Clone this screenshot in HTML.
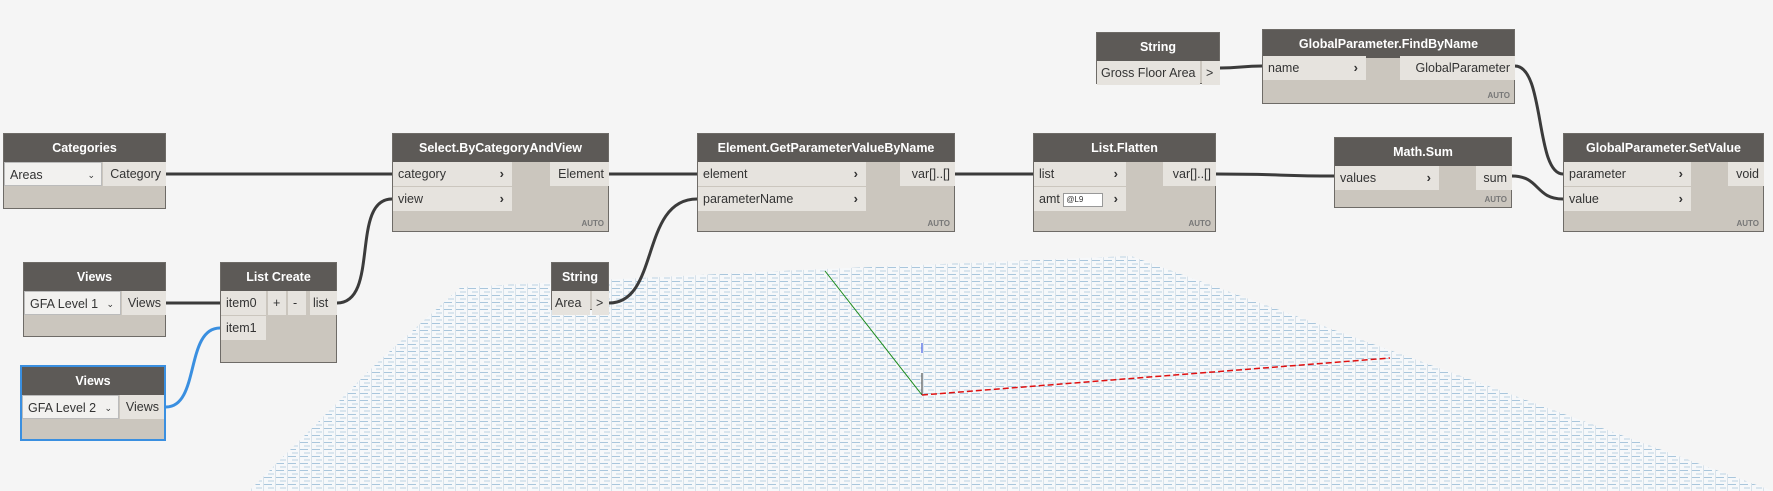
<!DOCTYPE html>
<html><head><meta charset="utf-8"><style>
*{margin:0;padding:0;box-sizing:border-box}
body{width:1773px;height:491px;background:#f5f5f5;position:relative;overflow:hidden;font-family:"Liberation Sans",sans-serif;font-size:12.5px;color:#333}
.n{position:absolute;background:#cbc6be;border:1px solid #6e6b67}
.h{position:absolute;left:0;right:0;top:0;height:28px;background:#5d5a57;color:#fff;font-weight:bold;font-size:12.5px;text-align:center;line-height:28px}
.p{position:absolute;background:#e6e3de;height:24px;line-height:24px;padding-left:5px;white-space:nowrap}
.a{position:absolute;right:4px;font-weight:bold;font-size:8px;color:#777}
.c{position:absolute;right:8px;font-weight:bold;font-size:13px}
.o{text-align:right;padding-right:5px}
svg{position:absolute;left:0;top:0}
</style></head><body>
<svg width="1773" height="491">
<defs>
<pattern id="g" width="12" height="7" patternUnits="userSpaceOnUse">
<rect width="12" height="7" fill="#f6f8fa"/>
<rect x="0" y="1" width="8" height="1" fill="#a9c6dc"/>
<rect x="4" y="4.5" width="6" height="1" fill="#bcd2e2"/>
<rect x="11" y="0" width="1" height="7" fill="#d8e2ea"/>
</pattern>
</defs>
<polygon points="461,287 801,270 1131,256 1480,383 1773,491 249,491 380,360" fill="url(#g)"/>
<line x1="825" y1="271" x2="922" y2="395" stroke="#1a8a1a" stroke-width="1"/>
<line x1="922" y1="343" x2="922" y2="353" stroke="#2040e0" stroke-width="1"/>
<line x1="922" y1="373" x2="922" y2="395" stroke="#333" stroke-width="1"/>
<line x1="922" y1="395" x2="1390" y2="358" stroke="#e01010" stroke-width="1.5" stroke-dasharray="6,3"/>
<g fill="none" stroke="#3b3b3b" stroke-width="3">
<path d="M166,174 L392,174"/>
<path d="M166,303 L220,303"/>
<path d="M337,303 C380,303 350,199 392,199"/>
<path d="M609,174 L697,174"/>
<path d="M609,303 C660,303 640,199 697,199"/>
<path d="M955,174 L1033,174"/>
<path d="M1216,174 C1280,174 1280,176 1334,176"/>
<path d="M1512,176 C1540,176 1535,199 1563,199"/>
<path d="M1220,68 C1240,68 1242,66 1262,66"/>
<path d="M1515,66 C1545,66 1535,174 1563,174"/>
</g>
<path d="M166,407 C200,407 185,328 220,328" fill="none" stroke="#3a8fe0" stroke-width="3"/>
</svg>

<div class="n" style="left:3px;top:133px;width:163px;height:76px"><div class="h">Categories</div>
<div class="p" style="left:0;top:28px;width:98px;background:#f2f1ef;border:1px solid #bbb">Areas<span style="position:absolute;right:6px;font-size:9px">&#8964;</span></div>
<div class="p o" style="left:99px;top:28px;width:63px">Category</div></div>

<div class="n" style="left:23px;top:262px;width:143px;height:75px"><div class="h">Views</div>
<div class="p" style="left:0;top:28px;width:97px;background:#f2f1ef;border:1px solid #bbb">GFA Level 1<span style="position:absolute;right:6px;font-size:9px">&#8964;</span></div>
<div class="p o" style="left:98px;top:28px;width:44px">Views</div></div>

<div class="n" style="left:20px;top:365px;width:146px;height:76px;border:2px solid #3a8fe0"><div class="h">Views</div>
<div class="p" style="left:0;top:28px;width:97px;background:#f2f1ef;border:1px solid #bbb">GFA Level 2<span style="position:absolute;right:6px;font-size:9px">&#8964;</span></div>
<div class="p o" style="left:98px;top:28px;width:44px">Views</div></div>

<div class="n" style="left:220px;top:262px;width:117px;height:101px"><div class="h">List Create</div>
<div class="p" style="left:0;top:28px;width:45px">item0</div>
<div class="p" style="left:47px;top:28px;width:18px">+</div>
<div class="p" style="left:67px;top:28px;width:18px">-</div>
<div class="p" style="left:89px;top:28px;width:27px;padding-left:3px">list</div>
<div class="p" style="left:0;top:53px;width:45px">item1</div></div>

<div class="n" style="left:392px;top:133px;width:217px;height:99px"><div class="h">Select.ByCategoryAndView</div>
<div class="p" style="left:0;top:28px;width:119px">category<span class="c">&#8250;</span></div>
<div class="p" style="left:0;top:53px;width:119px">view<span class="c">&#8250;</span></div>
<div class="p o" style="left:157px;top:28px;width:59px">Element</div>
<span class="a" style="bottom:3px">AUTO</span></div>

<div class="n" style="left:551px;top:262px;width:58px;height:48px"><div class="h">String</div>
<div class="p" style="left:0;top:28px;width:38px;padding-left:3px">Area</div>
<div class="p" style="left:40px;top:28px;width:17px;padding-left:4px">&gt;</div></div>

<div class="n" style="left:697px;top:133px;width:258px;height:99px"><div class="h">Element.GetParameterValueByName</div>
<div class="p" style="left:0;top:28px;width:168px">element<span class="c">&#8250;</span></div>
<div class="p" style="left:0;top:53px;width:168px">parameterName<span class="c">&#8250;</span></div>
<div class="p o" style="left:202px;top:28px;width:55px">var[]..[]</div>
<span class="a" style="bottom:3px">AUTO</span></div>

<div class="n" style="left:1033px;top:133px;width:183px;height:99px"><div class="h">List.Flatten</div>
<div class="p" style="left:0;top:28px;width:92px">list<span class="c">&#8250;</span></div>
<div class="p" style="left:0;top:53px;width:92px">amt <span style="display:inline-block;width:40px;height:14px;border:1px solid #999;background:#fff;font-size:8px;line-height:12px;vertical-align:middle;padding-left:2px">@L9</span><span class="c">&#8250;</span></div>
<div class="p o" style="left:129px;top:28px;width:53px">var[]..[]</div>
<span class="a" style="bottom:3px">AUTO</span></div>

<div class="n" style="left:1334px;top:137px;width:178px;height:71px"><div class="h">Math.Sum</div>
<div class="p" style="left:0;top:28px;width:104px">values<span class="c">&#8250;</span></div>
<div class="p o" style="left:141px;top:28px;width:36px">sum</div>
<span class="a" style="bottom:3px">AUTO</span></div>

<div class="n" style="left:1563px;top:133px;width:201px;height:99px"><div class="h">GlobalParameter.SetValue</div>
<div class="p" style="left:0;top:28px;width:127px">parameter<span class="c">&#8250;</span></div>
<div class="p" style="left:0;top:53px;width:127px">value<span class="c">&#8250;</span></div>
<div class="p o" style="left:164px;top:28px;width:36px">void</div>
<span class="a" style="bottom:3px">AUTO</span></div>

<div class="n" style="left:1096px;top:32px;width:124px;height:52px"><div class="h">String</div>
<div class="p" style="left:0;top:28px;width:103px;padding-left:4px">Gross Floor Area</div>
<div class="p" style="left:105px;top:28px;width:18px;padding-left:4px">&gt;</div></div>

<div class="n" style="left:1262px;top:29px;width:253px;height:75px"><div class="h">GlobalParameter.FindByName</div>
<div class="p" style="left:0;top:26px;width:103px">name<span class="c">&#8250;</span></div>
<div class="p o" style="left:137px;top:26px;width:115px">GlobalParameter</div>
<span class="a" style="bottom:3px">AUTO</span></div>
</body></html>
